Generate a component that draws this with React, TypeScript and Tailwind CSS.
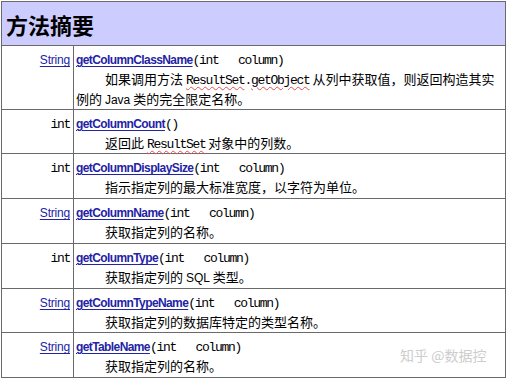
import React from 'react';

interface MethodRow {
  type: 'String' | 'int';
  name: string;
  params: string;
  desc: React.ReactNode;
  extra?: React.ReactNode;
  height: string;
}

const cjk = "font-['Noto_Sans_CJK_SC',sans-serif]";
const mono = "font-['Liberation_Mono','Noto_Sans_CJK_SC',monospace] tracking-[-1.3px]";

const Mono: React.FC<{ children: React.ReactNode; wavy?: boolean }> = ({ children, wavy }) => (
  <span className={`${mono} ${wavy ? 'underline decoration-wavy decoration-[#e05050] decoration-[1px] underline-offset-2' : ''}`}>
    {children}
  </span>
);

const Sans: React.FC<{ children: React.ReactNode }> = ({ children }) => (
  <span className="font-['Liberation_Sans',sans-serif] text-[12px]">{children}</span>
);

const rows: MethodRow[] = [
  {
    type: 'String',
    name: 'getColumnClassName',
    params: '(int   column)',
    desc: (
      <>
        如果调用方法 <Mono wavy>ResultSet</Mono><Mono>.</Mono><Mono wavy>getObject</Mono> 从列中获取值，则返回构造其实
      </>
    ),
    extra: (
      <>
        例的 <Sans>Java</Sans> 类的完全限定名称。
      </>
    ),
    height: 'h-[64px]',
  },
  {
    type: 'int',
    name: 'getColumnCount',
    params: '()',
    desc: (
      <>
        返回此 <Mono wavy>ResultSet</Mono> 对象中的列数。
      </>
    ),
    height: 'h-[44px]',
  },
  {
    type: 'int',
    name: 'getColumnDisplaySize',
    params: '(int   column)',
    desc: <>指示指定列的最大标准宽度，以字符为单位。</>,
    height: 'h-[45px]',
  },
  {
    type: 'String',
    name: 'getColumnName',
    params: '(int   column)',
    desc: <>获取指定列的名称。</>,
    height: 'h-[45px]',
  },
  {
    type: 'int',
    name: 'getColumnType',
    params: '(int   column)',
    desc: (
      <>
        获取指定列的 <Sans>SQL</Sans> 类型。
      </>
    ),
    height: 'h-[45px]',
  },
  {
    type: 'String',
    name: 'getColumnTypeName',
    params: '(int   column)',
    desc: <>获取指定列的数据库特定的类型名称。</>,
    height: 'h-[44px]',
  },
  {
    type: 'String',
    name: 'getTableName',
    params: '(int   column)',
    desc: <>获取指定列的名称。</>,
    height: 'h-[44px]',
  },
];

const App: React.FC = () => {
  return (
    <div className="relative w-[508px] h-[379px] bg-white overflow-hidden">
      <div className="ml-[1px] mt-[1px] w-[505px] border border-[#6a6a6a] text-[13px] text-black">
        <div className="h-[44px] bg-[#ccccff] border-b border-[#6a6a6a] flex items-center pl-[4px]">
          <span className={`${cjk} text-[22px] font-bold leading-none`}>方法摘要</span>
        </div>
        {rows.map((row, idx) => (
          <div
            key={row.name}
            className={`flex ${row.height} ${idx < rows.length - 1 ? 'border-b border-[#6a6a6a]' : ''}`}
          >
            <div className="w-[72px] shrink-0 border-r border-[#6a6a6a] text-right pr-[3px] pt-[4px] leading-[18px]">
              {row.type === 'String' ? (
                <span className="font-['Liberation_Sans',sans-serif] text-[12px] text-[#2323a5] underline underline-offset-2 tracking-[-0.2px]">
                  String
                </span>
              ) : (
                <span className={mono}>int</span>
              )}
            </div>
            <div className={`flex-1 pl-[2px] pt-[4px] leading-[18px] ${cjk} whitespace-nowrap`}>
              <div>
                <span className="font-['Liberation_Sans',sans-serif] font-bold text-[12px] text-[#2323a5] underline underline-offset-2 tracking-[-0.6px]">
                  {row.name}
                </span>
                <span className={`${mono} whitespace-pre`}>{row.params}</span>
              </div>
              <div className="pl-[29px]">{row.desc}</div>
              {row.extra && <div>{row.extra}</div>}
            </div>
          </div>
        ))}
      </div>
      <div className={`absolute left-[400px] top-[345px] ${cjk} text-[14px] text-[#cdcdcd]`}>
        知乎 @数据控
      </div>
    </div>
  );
};

export default App;
